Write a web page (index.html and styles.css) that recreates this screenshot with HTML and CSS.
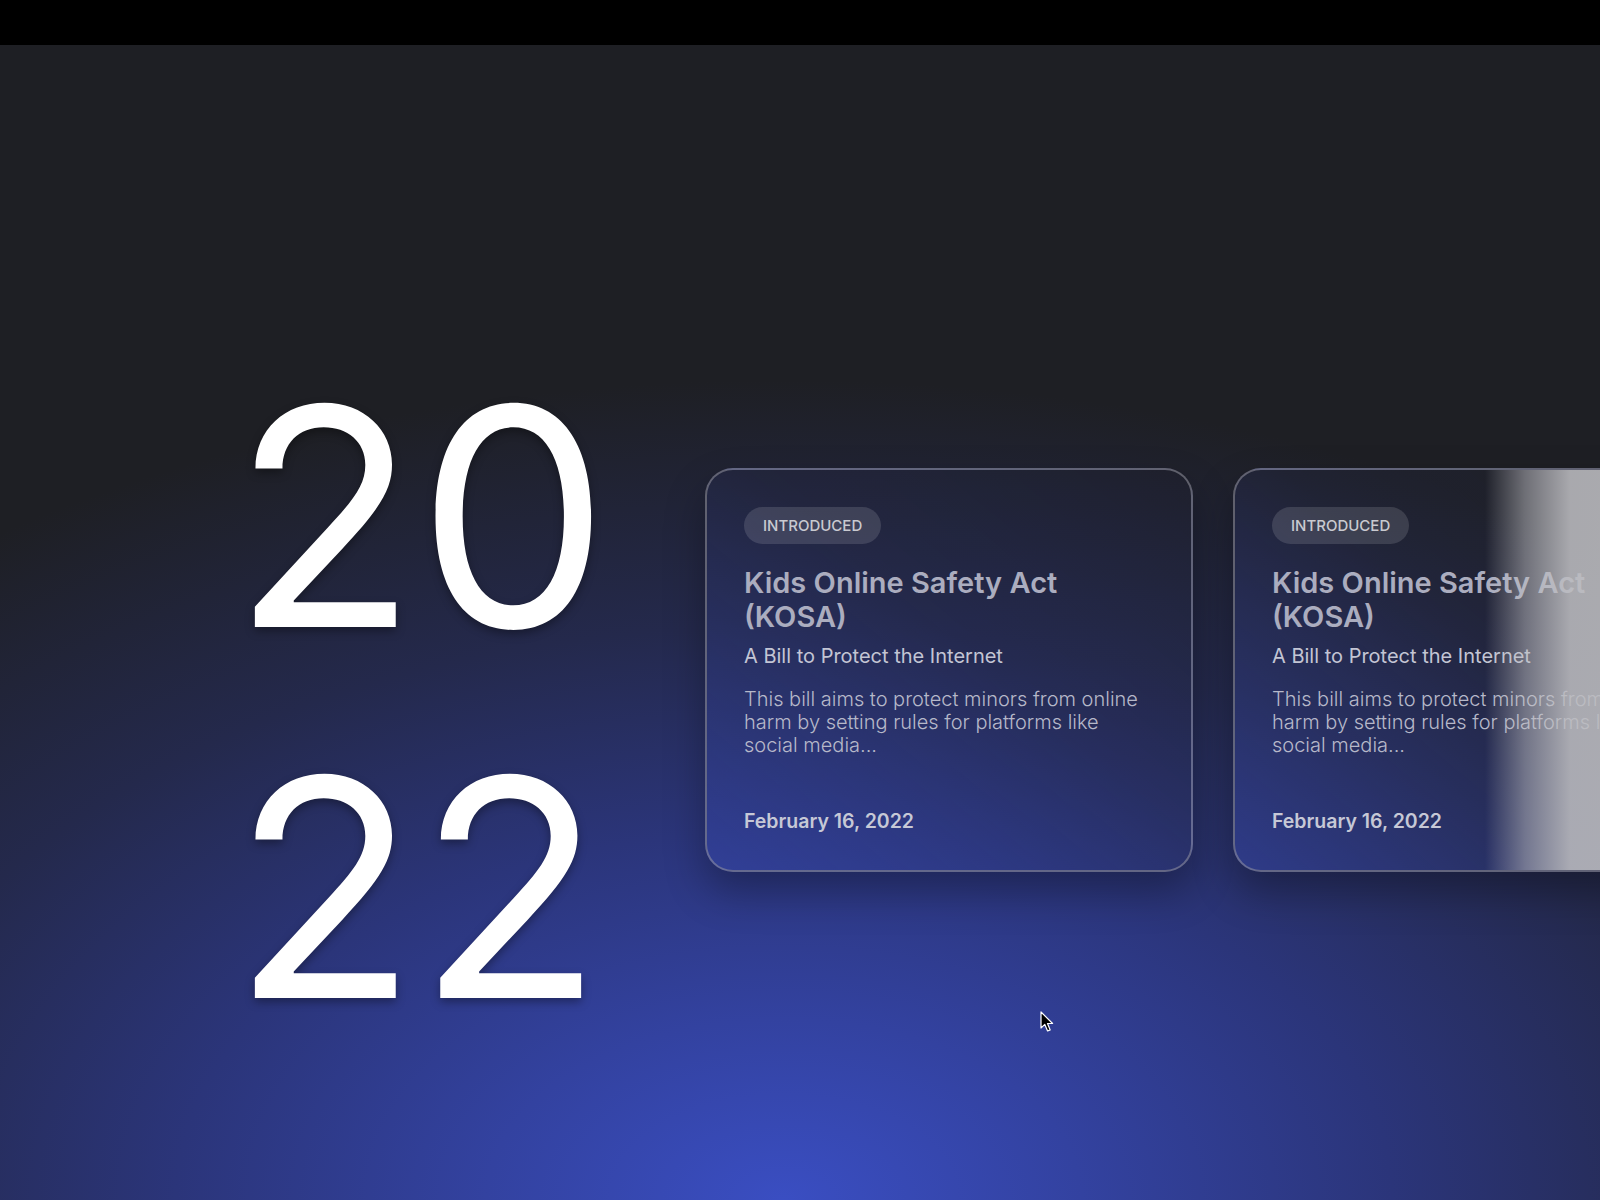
FILE: index.html
```html
<!DOCTYPE html>
<html lang="en">
<head>
    <meta charset="UTF-8">
    <meta name="viewport" content="width=device-width, initial-scale=1.0">
    <title>Timeline 2022</title>
    <link rel="stylesheet" href="styles.css">
</head>
<body>

    <!-- Верхняя полоса -->
    <div class="top-bar"></div>

    <div class="timeline">
        <!-- Год -->
        <div class="year">
            <span>20</span>
            <span>22</span>
        </div>

        <!-- Карточки законопроектов -->
        <div class="cards-track">
            <div class="bill-card">
                <span class="status">Introduced</span>
                <h2 class="bill-title">Kids Online Safety Act (KOSA)</h2>
                <p class="bill-subtitle">A Bill to Protect the Internet</p>
                <p class="bill-text">This bill aims to protect minors from online harm by setting rules for platforms like social media...</p>
                <span class="bill-date">February 16, 2022</span>
            </div>

            <div class="bill-card">
                <span class="status">Introduced</span>
                <h2 class="bill-title">Kids Online Safety Act (KOSA)</h2>
                <p class="bill-subtitle">A Bill to Protect the Internet</p>
                <p class="bill-text">This bill aims to protect minors from online harm by setting rules for platforms like social media...</p>
                <span class="bill-date">February 16, 2022</span>
                <div class="card-glare"></div>
            </div>
        </div>
    </div>

    <!-- Курсор -->
    <svg class="cursor" width="14" height="22" viewBox="0 0 14 22">
        <path d="M1 1 L1 17 L4.8 13.4 L7.6 20 L10.2 18.9 L7.5 12.5 L12.6 12.5 Z" fill="#000" stroke="#fff" stroke-width="1.2" stroke-linejoin="round"/>
    </svg>

</body>
</html>
```

FILE: styles.css
```css
body {
    margin: 0;
    padding: 0;
    height: 100vh;
    overflow: hidden;
    font-family: 'Inter', 'Noto Sans', sans-serif;
    background-color: #1e1f24;
    background-image: radial-gradient(ellipse 1350px 820px at 49% 100%, #3a4ec2 0%, #3342a0 22%, #2b357a 45%, #24294c 70%, #1e1f24 100%);
    position: relative;
}

.top-bar {
    height: 45px;
    background: #000;
}

.timeline {
    display: flex;
    align-items: flex-start;
    padding: 286px 0 0 232px;
}

/* Год крупными цифрами */
.year {
    width: 473px;
    flex-shrink: 0;
    display: flex;
    flex-direction: column;
    font-size: 304px;
    line-height: 371px;
    font-weight: 400;
    color: #fff;
    text-shadow: 0 4px 10px rgba(0, 0, 0, 0.35);
}

.cards-track {
    display: flex;
    gap: 40px;
    margin-top: 137px;
}

.bill-card {
    position: relative;
    width: 488px;
    height: 404px;
    box-sizing: border-box;
    flex-shrink: 0;
    padding: 37px 40px 37px 37px;
    border: 2px solid rgba(150, 150, 160, 0.55);
    border-radius: 28px;
    background: linear-gradient(to top right, rgba(58, 78, 190, 0.35), rgba(40, 46, 90, 0.2) 55%, rgba(28, 30, 44, 0.25));
    box-shadow: 0 20px 40px rgba(0, 0, 0, 0.3);
    display: flex;
    flex-direction: column;
    overflow: hidden;
}

.status {
    align-self: flex-start;
    padding: 9px 19px;
    font-size: 15px;
    line-height: 19px;
    font-weight: 500;
    text-transform: uppercase;
    color: #c9cad0;
    background: rgba(255, 255, 255, 0.13);
    border-radius: 19px;
}

.bill-title {
    margin: 22px 0 0;
    font-size: 29px;
    line-height: 33.6px;
    font-weight: 600;
    color: #abadbf;
}

.bill-subtitle {
    margin: 11px 0 0;
    font-size: 20px;
    line-height: 24px;
    color: #c3c5d4;
}

.bill-text {
    margin: 20px 0 0;
    font-size: 20px;
    line-height: 23px;
    font-weight: 300;
    color: #b6b8c9;
}

.bill-date {
    margin-top: auto;
    font-size: 19.5px;
    line-height: 23px;
    font-weight: 600;
    color: #c6c8d6;
}

/* Блик по правому краю второй карточки */
.card-glare {
    position: absolute;
    top: 0;
    bottom: 0;
    left: 250px;
    right: 0;
    background: linear-gradient(to right, rgba(190, 190, 194, 0) 0, rgba(190, 190, 194, 0.5) 40px, rgba(188, 188, 192, 0.88) 85px, rgba(185, 185, 188, 0.92) 100%);
}

.cursor {
    position: absolute;
    left: 1040px;
    top: 1011px;
}
```
